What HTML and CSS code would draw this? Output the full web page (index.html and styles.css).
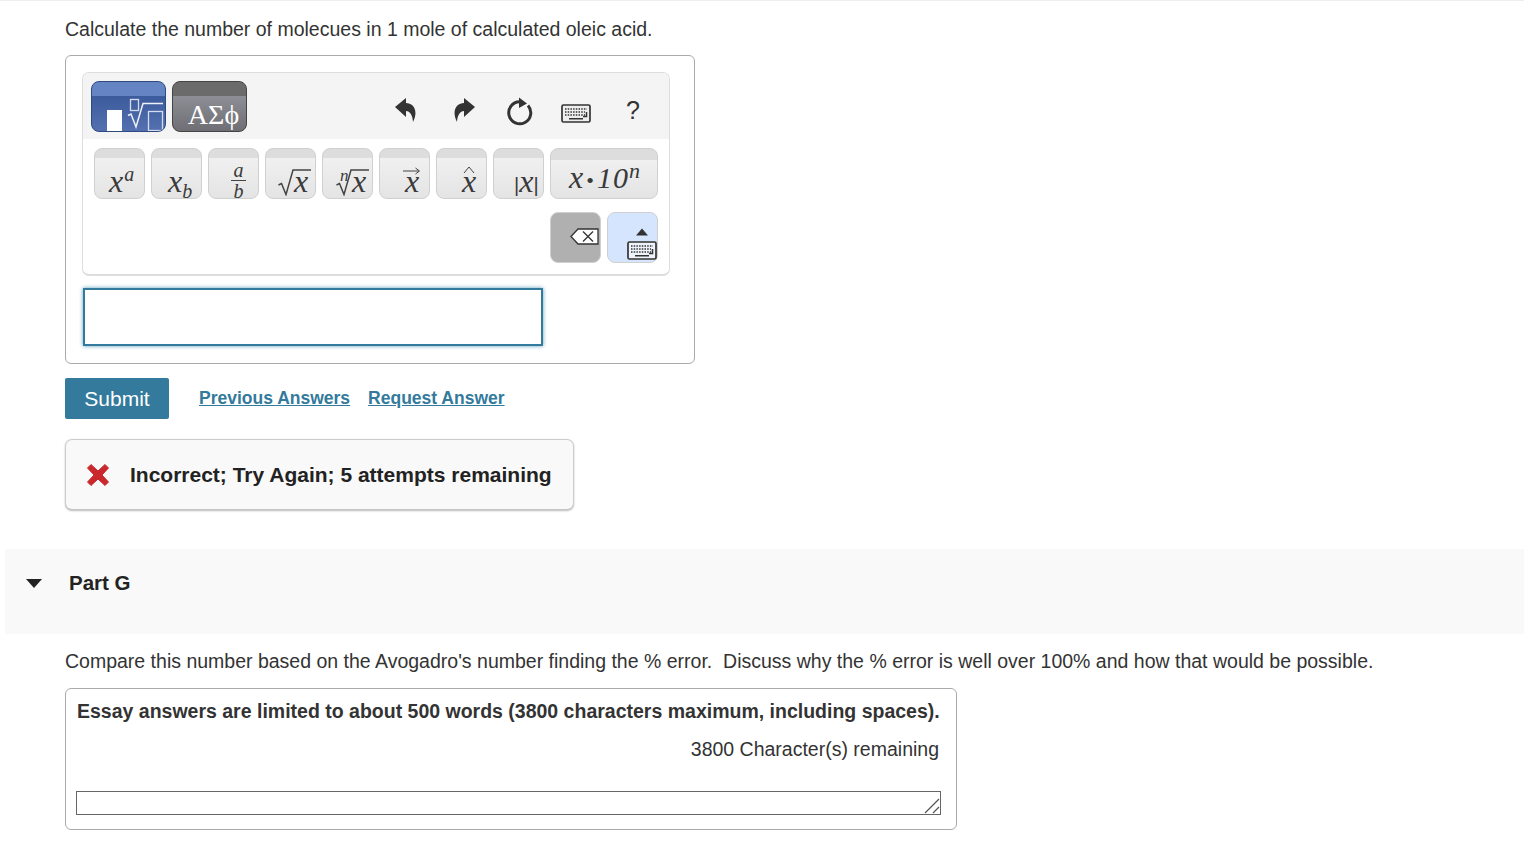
FILE: index.html
```html
<!DOCTYPE html>
<html lang="en">
<head>
<meta charset="utf-8">
<title>Part F and Part G</title>
<link rel="stylesheet" href="styles.css">
</head>
<body>
<main class="page">
  <section class="part">
    <p class="prompt">Calculate the number of molecues in 1 mole of calculated oleic acid.</p>
    <div class="answer-box">
      <div class="editor">
        <div class="toolbar">
          <div class="tabs">
            <button class="tab tab-templates" aria-label="Templates">
              <svg class="tab-icon" width="75" height="51" viewBox="0 0 75 51">
                <rect x="16" y="29" width="15" height="22" fill="#fff"/>
                <rect x="39.500" y="18.500" width="8" height="11" fill="none" stroke="#d5dcee" stroke-width="1.300"/>
                <path d="M37 34.500 L40 33 L45 46 L52 22.500 H72" fill="none" stroke="#eef1f8" stroke-width="1.500"/>
                <rect x="57.500" y="30.500" width="14" height="19" fill="none" stroke="#d5dcee" stroke-width="1.300"/>
              </svg>
            </button>
            <button class="tab tab-symbols">ΑΣϕ</button>
          </div>
          <div class="actions">
            <svg class="action" width="24" height="26" viewBox="0 0 24 26" aria-label="Undo"><path d="M1 10 L12 1 V6 C19 6 25 13 19 25 C18.500 18 16 14 12 14 V20 Z" fill="#333"/></svg>
            <svg class="action" width="24" height="26" viewBox="0 0 24 26" aria-label="Redo"><path d="M22 10 L11 1 V6 C4 6 -2 13 4 25 C4.500 18 7 14 11 14 V20 Z" fill="#333"/></svg>
            <svg class="action" width="28" height="30" viewBox="0 0 28 30" aria-label="Reset"><path d="M22 8.500 A11 11 0 1 1 13.500 4.800" fill="none" stroke="#333" stroke-width="3"/><path d="M13 0.500 L21 6.500 L13 11 Z" fill="#333"/></svg>
            <svg class="action" width="30" height="20" viewBox="0 0 30 20" aria-label="Keyboard"><rect x="1" y="1" width="28" height="17" rx="1.500" fill="#eee" stroke="#333" stroke-width="1.700"/><path d="M4 5 H26 M4 8 H24 M4 11 H24" stroke="#333" stroke-width="1.500" stroke-dasharray="1.500 1.200"/><path d="M25.500 8 V12.500 H22 M8 14.800 H22" stroke="#333" stroke-width="1.500" fill="none"/></svg>
            <span class="help">?</span>
          </div>
        </div>
        <div class="keys">
          <div class="key-row">
            <button class="key key-sup"><span class="mi">x<sup class="up">a</sup></span></button>
            <button class="key key-sub"><span class="mi">x<sub class="down">b</sub></span></button>
            <button class="key key-frac"><span class="frac"><span class="num">a</span><span class="den">b</span></span></button>
            <button class="key key-sqrt"><span class="mi"><svg class="radical" width="34" height="27" viewBox="0 0 34 27"><path d="M0.500 16 L3.500 14.500 L8 25.500 L15 1 H33" fill="none" stroke="#444" stroke-width="1.500"/></svg><span class="radicand">x</span></span></button>
            <button class="key key-nroot"><span class="mi"><sup class="index">n</sup><svg class="radical" width="34" height="27" viewBox="0 0 34 27"><path d="M0.500 16 L3.500 14.500 L8 25.500 L15 1 H33" fill="none" stroke="#444" stroke-width="1.500"/></svg><span class="radicand">x</span></span></button>
            <button class="key key-vec"><span class="accent"><svg class="accent-vec" width="18" height="8" viewBox="0 0 18 8"><path d="M0 4 H16 M12.500 1 L16.500 4 L12.500 7" fill="none" stroke="#444"/></svg><span class="base">x</span></span></button>
            <button class="key key-hat"><span class="accent"><svg class="accent-hat" width="12" height="8" viewBox="0 0 12 8"><path d="M1 7 L6 1 L11 7" fill="none" stroke="#444"/></svg><span class="base">x</span></span></button>
            <button class="key key-abs"><span class="mi"><span class="bar">|</span>x<span class="bar">|</span></span></button>
            <button class="key key-wide"><span class="mi sci">x<span class="dot">•</span><span class="digits">10</span><sup class="up">n</sup></span></button>
          </div>
          <div class="key-row key-row-end">
            <button class="key key-back" aria-label="Delete">
              <svg width="29" height="17" viewBox="0 0 29 17"><path d="M1 8.500 L8 1 H28 V16 H8 Z" fill="#fff" stroke="#333" stroke-width="1.300"/><path d="M13 3.500 L23 13.500 M23 3.500 L13 13.500" stroke="#333" stroke-width="1.300"/></svg>
            </button>
            <button class="key key-kbd" aria-label="Toggle keyboard">
              <span class="kbd-stack">
                <svg width="14" height="8" viewBox="0 0 14 8"><path d="M7 0.500 L13 7.500 H1 Z" fill="#333"/></svg>
                <svg width="30" height="20" viewBox="0 0 30 20"><rect x="1" y="1" width="28" height="17" rx="1.500" fill="#eef3fb" stroke="#333" stroke-width="1.700"/><path d="M4 5 H26 M4 8 H24 M4 11 H24" stroke="#333" stroke-width="1.500" stroke-dasharray="1.500 1.200"/><path d="M25.500 8 V12.500 H22 M8 14.800 H22" stroke="#333" stroke-width="1.500" fill="none"/></svg>
              </span>
            </button>
          </div>
        </div>
      </div>
      <div class="math-input"></div>
    </div>
    <div class="submit-row">
      <button class="submit">Submit</button>
      <a class="link" href="#">Previous Answers</a>
      <a class="link" href="#">Request Answer</a>
    </div>
    <div class="feedback">
      <svg class="cross" width="22" height="22" viewBox="0 0 22 22" aria-hidden="true"><path d="M4 0.500 L11 7 L18 0.500 L21.500 4 L15 11 L21.500 18 L18 21.500 L11 15 L4 21.500 L0.500 18 L7 11 L0.500 4 Z" fill="#c9282d" stroke="#c9282d" stroke-linejoin="round"/></svg>
      <span>Incorrect; Try Again; 5 attempts remaining</span>
    </div>
  </section>
  <section class="part-g">
    <header class="part-head">
      <span class="caret"></span>
      <h2>Part G</h2>
    </header>
    <p class="prompt prompt-g">Compare this number based on the Avogadro's number finding the % error.&nbsp; Discuss why the % error is well over 100% and how that would be possible.</p>
    <div class="essay">
      <p class="essay-limit">Essay answers are limited to about 500 words (3800 characters maximum, including spaces).</p>
      <p class="essay-count">3800 Character(s) remaining</p>
      <div class="essay-input">
        <svg class="grip" width="16" height="16" viewBox="0 0 16 16"><path d="M1 15 L15 1 M9 15 L15 9" stroke="#555" stroke-width="1.200"/></svg>
      </div>
    </div>
  </section>
</main>
</body>
</html>
```
FILE: styles.css
```css
* { box-sizing: border-box; }
html, body { margin: 0; padding: 0; background: #fff; }
body {
  width: 1524px;
  height: 842px;
  overflow: hidden;
  font-family: "Liberation Sans", Arial, sans-serif;
  color: #333;
  border-top: 1px solid #eee;
}
button { font-family: inherit; padding: 0; margin: 0; }
p { margin: 0; }

.part { padding: 15px 0 0 65px; }
.prompt { font-size: 19.5px; line-height: 26px; color: #333; }

.answer-box {
  width: 630px;
  height: 309px;
  margin-top: 13px;
  padding: 16px;
  border: 1px solid #aaa;
  border-radius: 6px;
}
.editor {
  width: 588px;
  height: 204px;
  border: 1px solid #ddd;
  border-bottom-width: 2px;
  border-radius: 7px;
  overflow: hidden;
}
.toolbar {
  height: 66px;
  background: #f4f4f4;
  display: flex;
  justify-content: space-between;
  padding: 8px 0 0 8px;
}
.tabs { display: flex; gap: 6px; height: 51px; }
.tab {
  width: 75px;
  height: 51px;
  border: 1px solid #444;
  border-radius: 8px;
  overflow: hidden;
  display: block;
}
.tab-templates {
  border-color: #2e4a80;
  background: linear-gradient(#6484c4 0, #6484c4 14px, #3c5b9c 14px, #5470b0 100%);
}
.tab-icon { display: block; margin: -1px; }
.tab-symbols {
  background: linear-gradient(#6b6b6b 0, #6b6b6b 14px, #8e8e96 14px, #6e6e74 100%);
  color: #fff;
  font-family: "Liberation Serif", serif;
  font-size: 28px;
  line-height: 30px;
  padding-top: 16px;
  padding-left: 8px;
}
.actions {
  display: flex;
  align-items: center;
  width: 275px;
}
.action { display: block; flex: none; }
.actions .action:nth-child(2) { margin-left: 35px; }
.actions .action:nth-child(3) { margin-left: 29px; margin-top: 4px; }
.actions .action:nth-child(4) { margin-left: 27px; margin-top: 8px; }
.help { margin-left: 35px; font-size: 25px; line-height: 30px; color: #333; }

.keys { padding: 9px 11px 0; background: #fff; }
.key-row { display: flex; gap: 6px; }
.key-row-end { justify-content: flex-end; margin-top: 13px; }
.key {
  width: 51px;
  height: 51px;
  border: 1px solid #d0d0d0;
  border-radius: 8px;
  background: linear-gradient(#ddd 0, #ddd 9px, #f0f0f0 9px, #e4e4e4 100%);
  color: #3a3a3a;
  display: flex;
  align-items: flex-end;
  justify-content: flex-start;
  font-family: "Liberation Serif", serif;
  font-style: italic;
  font-size: 32px;
  line-height: 32px;
}
.key-sup { padding-left: 14px; }
.key-sub { padding-left: 16px; }
.key-frac { padding-left: 22px; }
.key-sqrt { padding-left: 12px; }
.key-nroot { padding-left: 17px; }
.key-vec { padding-left: 23px; }
.key-hat { padding-left: 25px; }
.key-abs { padding-left: 20px; }
.key-wide { width: 108px; padding-left: 18px; background: linear-gradient(#ddd 0, #ddd 11px, #f0f0f0 11px, #e4e4e4 100%); }

.mi { display: block; white-space: nowrap; margin-bottom: 1px; }
.up { font-size: 20px; line-height: 0; vertical-align: 11px; margin-left: 1px; }
.down { font-size: 20px; line-height: 0; vertical-align: -6px; }

.frac { display: flex; flex-direction: column; align-items: center; width: 15px; font-size: 20px; line-height: 20px; margin-bottom: -3px; }
.num { width: 15px; border-bottom: 1px solid #444; text-align: center; }

.radical { vertical-align: -4px; }
.radicand { margin-left: -18px; }
.index { font-size: 17px; line-height: 0; vertical-align: 11px; margin-right: -12.500px; }

.accent { display: flex; flex-direction: column; align-items: center; padding-bottom: 5px; }
.accent svg { display: block; }
.accent-vec { margin-bottom: -6px; }
.accent-hat { margin-bottom: -5px; }
.base { line-height: 24px; }

.bar { font-family: "Liberation Sans", sans-serif; font-style: normal; font-size: 20px; line-height: 0; }

.sci { margin-bottom: 1px; }
.dot { font-style: normal; font-size: 22px; margin: 0 3px; }
.digits { font-size: 30px; letter-spacing: 1px; }
.sci .up { font-size: 22px; vertical-align: 10px; margin-left: 0; }

.key-back {
  background: #b0b0b0;
  align-items: center;
  justify-content: flex-end;
  padding: 0 1px 2px 0;
}
.key-back svg { display: block; }
.key-kbd { background: #d4e5fd; justify-content: flex-end; }
.kbd-stack { display: flex; flex-direction: column; align-items: center; gap: 5px; margin-bottom: 1px; }
.kbd-stack svg { display: block; }

.math-input {
  width: 460px;
  height: 58px;
  margin-top: 12px;
  margin-left: 1px;
  border: 2px solid #337a9c;
  box-shadow: 0 0 4px #5b9dbd;
  background: #fff;
}

.submit-row { display: flex; align-items: center; margin-top: 14px; height: 41px; }
.submit {
  width: 104px;
  height: 41px;
  background: #337a9c;
  color: #fff;
  border: 0;
  border-radius: 2px;
  font-size: 21px;
}
.link {
  color: #337a9c;
  font-weight: bold;
  font-size: 17.500px;
  text-decoration: underline;
  margin-left: 18px;
}
.submit + .link { margin-left: 30px; }

.feedback {
  width: 509px;
  height: 71px;
  margin-top: 20px;
  display: flex;
  align-items: center;
  padding-left: 21px;
  gap: 21px;
  background: #f9f9f9;
  border: 1px solid #ccc;
  border-bottom-color: #c4c4c4;
  border-radius: 7px;
  box-shadow: 0 1px 2px #bbb;
  font-size: 21px;
  font-weight: bold;
  color: #222;
}
.cross { flex: none; }

.part-g { margin-top: 39px; }
.part-head {
  margin-left: 5px;
  height: 85px;
  background: #f9f9f9;
  display: flex;
  align-items: flex-start;
  padding: 21px 0 0 21px;
}
.caret {
  width: 0;
  height: 0;
  margin-top: 9px;
  border-left: 8px solid transparent;
  border-right: 8px solid transparent;
  border-top: 9px solid #222;
}
.part-head h2 {
  margin: 0 0 0 27px;
  font-size: 20.500px;
  line-height: 26px;
  font-weight: bold;
  color: #222;
}
.prompt-g { margin: 14px 0 0 65px; }

.essay {
  width: 892px;
  height: 142px;
  margin: 14px 0 0 65px;
  padding: 9px 17px 0 11px;
  border: 1px solid #aaa;
  border-radius: 6px;
}
.essay-limit { font-size: 19.500px; line-height: 26px; font-weight: bold; color: #333; white-space: nowrap; }
.essay-count { font-size: 19.500px; line-height: 26px; text-align: right; margin-top: 12px; }
.essay-input {
  position: relative;
  width: 865px;
  height: 24px;
  margin: 29px 0 0 -1px;
  border: 1px solid #666;
}
.grip { position: absolute; right: 0; bottom: 0; }
```
